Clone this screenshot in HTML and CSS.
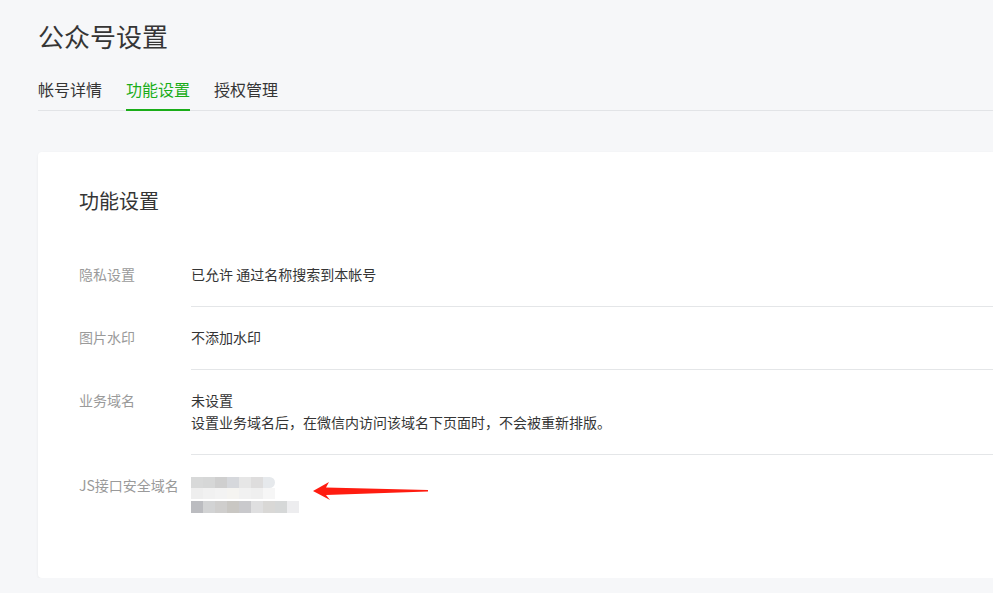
FILE: index.html
```html
<!DOCTYPE html>
<html lang="zh-CN">
<head>
    <meta charset="UTF-8">
    <meta name="viewport" content="width=device-width, initial-scale=1.0">
    <title>公众号设置</title>
    <link rel="stylesheet" href="styles.css">
</head>
<body>
    <div class="page">
        <h1 class="page-title">公众号设置</h1>

        <div class="tabs">
            <a class="tab">帐号详情</a>
            <a class="tab active">功能设置</a>
            <a class="tab">授权管理</a>
        </div>

        <div class="card">
            <h2 class="card-title">功能设置</h2>

            <div class="setting-row">
                <div class="setting-label">隐私设置</div>
                <div class="setting-value">已允许 通过名称搜索到本帐号</div>
            </div>
            <div class="setting-row">
                <div class="setting-label">图片水印</div>
                <div class="setting-value">不添加水印</div>
            </div>
            <div class="setting-row">
                <div class="setting-label">业务域名</div>
                <div class="setting-value">
                    <p>未设置</p>
                    <p>设置业务域名后，在微信内访问该域名下页面时，不会被重新排版。</p>
                </div>
            </div>
            <div class="setting-row">
                <div class="setting-label">JS接口安全域名</div>
                <div class="setting-value last">
                    <!-- domain list is masked -->
                    <div class="mosaic">
                        <div class="mosaic-line">
                            <span style="background:#d8d9d9"></span><span style="background:#d6d7d7"></span><span style="background:#cfcfcf"></span><span style="background:#d6d8dc"></span><span style="background:#e6e6e6"></span><span style="background:#dedddd"></span><span class="round" style="background:#e6e9ec"></span>
                        </div>
                        <div class="mosaic-line">
                            <span style="background:#eeeeee"></span><span style="background:#f1f1f1"></span><span style="background:#f3f3f3"></span><span style="background:#f5f4f1"></span><span style="background:#f1f1f1"></span><span style="background:#efefef"></span><span style="background:#f6f6f6"></span>
                        </div>
                        <div class="mosaic-line gap">
                            <span style="background:#bbbcc0"></span><span style="background:#d2d3d4"></span><span style="background:#cfcecd"></span><span style="background:#c9c7c3"></span><span style="background:#c9c9cc"></span><span style="background:#dfdfe0"></span><span style="background:#d9d8d6"></span><span style="background:#d6d8d8"></span><span style="background:#ededef"></span>
                        </div>
                    </div>
                    <svg class="pointer-arrow" width="120" height="22" viewBox="0 0 120 22">
                        <polygon points="1,11 17,2 14,7.5 116,10 116,11.5 14,15 18,20" fill="#ff1c10"/>
                    </svg>
                </div>
            </div>
        </div>
    </div>
</body>
</html>
```

FILE: styles.css
```css
* {
    margin: 0;
    padding: 0;
    box-sizing: border-box;
}

body {
    background: #f6f7f9;
    font-family: "Noto Sans CJK SC", "Noto Sans", sans-serif;
    color: #353535;
    overflow: hidden;
}

.page {
    padding: 18px 0 0 38px;
}

.page-title {
    font-size: 26px;
    font-weight: normal;
    line-height: 36px;
    color: #353535;
}

.tabs {
    display: flex;
    margin-top: 24px;
    border-bottom: 1px solid #e2e4e7;
}

.tab {
    font-size: 16px;
    line-height: 22px;
    padding-bottom: 9px;
    margin-right: 24px;
    margin-bottom: -1px;
    border-bottom: 2px solid transparent;
    color: #353535;
    cursor: pointer;
}

.tab.active {
    color: #1aad19;
    border-bottom-color: #1aad19;
}

.card {
    margin-top: 41px;
    background: #ffffff;
    border-radius: 4px 0 0 4px;
    box-shadow: 0 1px 3px rgba(0, 0, 0, 0.06);
    padding: 35px 0 39px 41px;
}

.card-title {
    font-size: 20px;
    font-weight: normal;
    line-height: 28px;
    margin-bottom: 29px;
}

.setting-row {
    display: flex;
    font-size: 14px;
    line-height: 22px;
}

.setting-label {
    width: 112px;
    flex-shrink: 0;
    padding: 19px 0 21px;
    color: #9a9a9a;
}

.setting-value {
    flex: 1;
    padding: 19px 0 21px;
    border-bottom: 1px solid #e4e6e8;
    position: relative;
}

.setting-value.last {
    border-bottom: none;
}

.mosaic {
    height: 44px;
    padding-top: 3px;
}

.mosaic-line {
    display: flex;
    height: 11px;
}

.mosaic-line.gap {
    margin-top: 2px;
    height: 12px;
}

.mosaic-line span {
    width: 12px;
    height: 100%;
}

.mosaic-line span.round {
    border-radius: 0 6px 6px 0;
}

.pointer-arrow {
    position: absolute;
    left: 121px;
    top: 25px;
}
```
